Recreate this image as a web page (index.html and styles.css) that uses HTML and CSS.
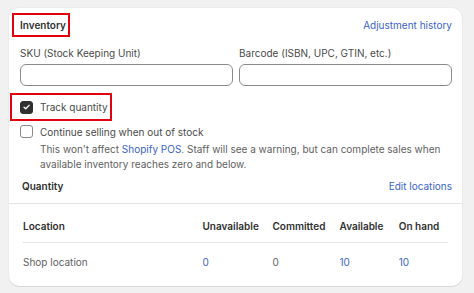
FILE: index.html
```html
<!DOCTYPE html>
<html>
<head>
<meta charset="utf-8">
<link rel="stylesheet" href="styles.css">
</head>
<body>
<div class="card">
  <div class="section">
    <div class="head">
      <span class="title hl">Inventory</span>
      <a class="link">Adjustment history</a>
    </div>
    <div class="fields">
      <label class="field"><span class="label">SKU (Stock Keeping Unit)</span><span class="input"></span></label>
      <label class="field"><span class="label">Barcode (ISBN, UPC, GTIN, etc.)</span><span class="input"></span></label>
    </div>
    <div class="check hl2">
      <span class="box on"><svg viewBox="0 0 12 12" width="12" height="12"><path d="M3.3 6.2 L5.2 8 L8.8 4.2" fill="none" stroke="#fff" stroke-width="1.5" stroke-linecap="round" stroke-linejoin="round"/></svg></span>
      <span class="nowrap">Track quantity</span>
    </div>
    <div class="check c2">
      <span class="box"></span>
      <span>Continue selling when out of stock</span>
    </div>
    <p class="help">This won't affect <a class="link">Shopify POS</a>. Staff will see a warning, but can complete sales when available inventory reaches zero and below.</p>
    <div class="head qty">
      <span class="title">Quantity</span>
      <a class="link">Edit locations</a>
    </div>
  </div>
  <div class="table">
    <div class="row th">
      <span class="c-loc">Location</span>
      <span class="c-un">Unavailable</span>
      <span class="c-co">Committed</span>
      <span class="c-av">Available</span>
      <span class="c-oh">On hand</span>
    </div>
    <div class="row">
      <span class="c-loc muted">Shop location</span>
      <span class="c-un link">0</span>
      <span class="c-co muted">0</span>
      <span class="c-av link">10</span>
      <span class="c-oh link">10</span>
    </div>
  </div>
</div>
</body>
</html>
```
FILE: styles.css
```css
html, body { margin: 0; padding: 0; }
body {
  background: #f1f1f1;
  font-family: Inter, "Noto Sans", sans-serif;
  font-size: 10px;
  color: #303030;
  width: 474px;
  height: 293px;
  overflow: hidden;
  padding: 8px 12px 0 9px;
  box-sizing: border-box;
}
.card {
  background: #fff;
  border-radius: 10px;
  box-shadow: 0 1px 0 #d8d8d8, 0 0 0 1px #ebebeb;
  height: 278px;
  overflow: hidden;
}
.section { padding: 7px 10px 0 11px; }
.head {
  display: flex;
  justify-content: space-between;
  align-items: center;
  height: 20px;
}
.title { font-weight: 600; color: #303030; }
.hl {
  border: 2px solid #e3000f;
  padding: 2px 2px 2px 6px;
  margin-left: -8px;
  height: 16px;
  line-height: 16px;
  box-sizing: content-box;
}
.link { color: #3a64c8; text-decoration: none; }
.nowrap { white-space: nowrap; }
.fields {
  display: flex;
  gap: 6px;
  margin-top: 11px;
}
.field { flex: 1; display: flex; flex-direction: column; }
.label { color: #4a4a4a; height: 14px; line-height: 14px; }
.input {
  margin-top: 4px;
  height: 20px;
  border: 1px solid #8a8a8a;
  border-radius: 6px;
}
.check {
  display: flex;
  align-items: center;
  gap: 7px;
  color: #4a4a4a;
}
.hl2 {
  border: 2px solid #e3000f;
  width: 90px;
  height: 24px;
  margin-left: -10px;
  padding-left: 8px;
  margin-top: 7px;
}
.c2 { margin-top: 4px; height: 13px; }
.box {
  width: 11px;
  height: 11px;
  border: 1px solid #8a8a8a;
  border-radius: 3px;
  display: flex;
  align-items: center;
  justify-content: center;
  flex: none;
}
.box.on { background: #303030; border-color: #303030; }
.help {
  margin: 4px 0 0 20px;
  color: #616161;
  line-height: 15px;
}
.qty { margin-top: 4px; }
.qty .title { padding-left: 2px; }
.table {
  border-top: 1px solid #e3e3e3;
  margin-top: 7px;
  padding: 0 14px;
}
.row {
  display: flex;
  align-items: center;
  height: 38px;
}
.row.th {
  font-weight: 600;
  border-bottom: 1px solid #e3e3e3;
  box-sizing: border-box;
  height: 39px;
  padding-top: 6px;
}
.c-loc { width: 182px; }
.c-un { width: 71px; }
.c-co { width: 68px; }
.c-av { width: 60px; }
.c-oh { width: 50px; }
.muted { color: #616161; font-weight: 400; }
```
